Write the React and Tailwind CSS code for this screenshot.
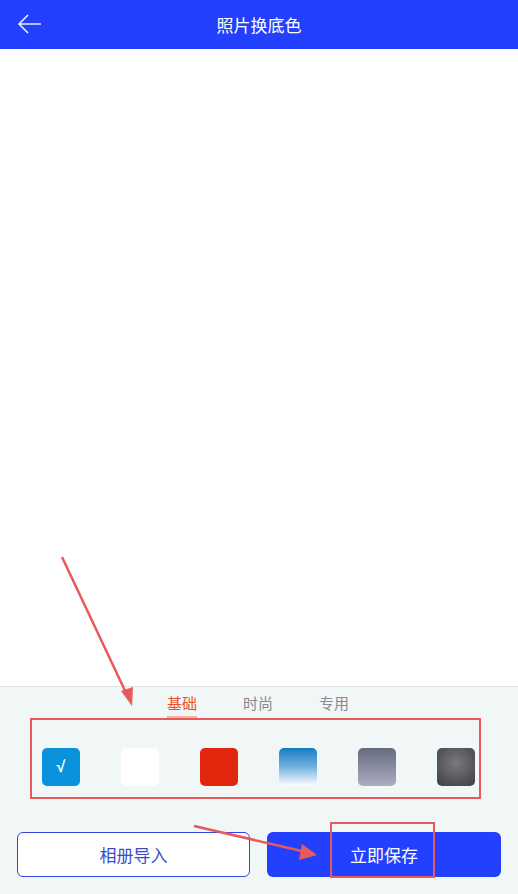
import { useState } from 'react';

const font = { fontFamily: '"Noto Sans CJK SC", "Noto Sans", sans-serif' };

const swatches = [
  'bg-[#0a92dc]',
  'bg-white',
  'bg-[#e1280e]',
  'bg-gradient-to-b from-[#0a7cc2] via-[#6fb2dd] to-white',
  'bg-gradient-to-b from-[#676b7e] to-[#acaec0]',
  'bg-[radial-gradient(circle_at_50%_40%,#7a7a7e,#3e3e42)]',
];

export default function App() {
  const [tab, setTab] = useState(0);
  const [picked, setPicked] = useState(0);

  return (
    <div className="relative w-[518px] h-[894px] flex flex-col bg-white overflow-hidden" style={font}>

      {/* HEADER */}
      <div className="h-[49px] bg-[#2340ff] flex items-center relative shrink-0">
        <svg className="absolute left-[17px] top-[13px]" width="25" height="22" viewBox="0 0 25 22" fill="none">
          <path d="M24 11H2M11 2L2 11L11 20" stroke="#e8ecff" strokeWidth="1.6" />
        </svg>
        <h1 className="w-full text-center text-white text-[17px] leading-none">照片换底色</h1>
      </div>

      {/* PHOTO AREA */}
      <div className="flex-1 bg-white" />

      {/* BOTTOM PANEL */}
      <div className="h-[208px] shrink-0 bg-[#f1f6f7] border-t border-[#dbe2e4] flex flex-col">
        <div className="h-[31px] flex items-end pl-[167px] gap-[46px]">
          {['基础', '时尚', '专用'].map((t, i) => (
            <button
              key={t}
              onClick={() => setTab(i)}
              className={`text-[15px] leading-none pb-[6px] border-b-2 ${tab === i ? 'text-[#e5532d] border-[#f5b4a2]' : 'text-[#8a8a8a] border-transparent'}`}
            >
              {t}
            </button>
          ))}
        </div>

        <div className="h-[80px] flex items-start pt-[30px] pl-[42px] gap-[41px]">
          {swatches.map((c, i) => (
            <button
              key={i}
              onClick={() => setPicked(i)}
              className={`w-[38px] h-[38px] rounded-[5px] flex items-center justify-center text-white text-[16px] font-bold font-['Liberation_Sans',sans-serif] ${c}`}
            >
              {picked === i ? '√' : ''}
            </button>
          ))}
        </div>

        <div className="flex gap-[17px] px-[17px] pt-[34px]">
          <button className="w-[233px] h-[45px] rounded-[6px] border border-[#3048e0] bg-white text-[#3a4cc8] text-[17px]">
            相册导入
          </button>
          <button className="w-[234px] h-[45px] rounded-[6px] bg-[#2340ff] text-white text-[17px]">
            立即保存
          </button>
        </div>
      </div>

      {/* ANNOTATIONS */}
      <div className="absolute left-[30px] top-[718px] w-[451px] h-[81px] border-2 border-[#e9595c] pointer-events-none" />
      <div className="absolute left-[330px] top-[822px] w-[105px] h-[56px] border-2 border-[#e9595c] pointer-events-none" />
      <svg className="absolute left-0 top-0 pointer-events-none" width="518" height="894" viewBox="0 0 518 894">
        <line x1="62" y1="557" x2="128" y2="697" stroke="#e9595c" strokeWidth="2.5" />
        <polygon points="132,706 121,691 133,687" fill="#e9595c" />
        <line x1="194" y1="826" x2="306" y2="852" stroke="#e9595c" strokeWidth="2.5" />
        <polygon points="317,855 302,844 299,860" fill="#e9595c" />
      </svg>
    </div>
  );
}
